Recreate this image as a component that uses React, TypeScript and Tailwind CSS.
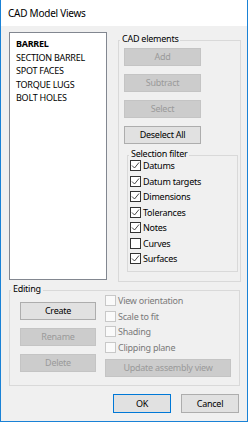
import React from "react";

const font = "font-['Segoe_UI','Noto_Sans',sans-serif] tracking-[-0.25px]";

const views = ["BARREL", "SECTION BARREL", "SPOT FACES", "TORQUE LUGS", "BOLT HOLES"];

const filters = [
  { label: "Datums", checked: true },
  { label: "Datum targets", checked: true },
  { label: "Dimensions", checked: true },
  { label: "Tolerances", checked: true },
  { label: "Notes", checked: true },
  { label: "Curves", checked: false },
  { label: "Surfaces", checked: true },
];

const editOptions = ["View orientation", "Scale to fit", "Shading", "Clipping plane"];

function Btn({ label, disabled, className = "" }: { label: string; disabled?: boolean; className?: string }) {
  return (
    <div
      className={`h-[18px] flex items-center justify-center text-[9px] border ${
        disabled ? "bg-[#cccccc] border-[#c4c4c4] text-[#9a9a9a]" : "bg-[#e1e1e1] border-[#adadad] text-black"
      } ${className}`}
    >
      {label}
    </div>
  );
}

function Check({ label, checked, disabled }: { label: string; checked?: boolean; disabled?: boolean }) {
  return (
    <div className="h-[15.5px] flex items-center gap-[2px]">
      <div
        className={`w-[11px] h-[11px] border flex items-center justify-center ${
          disabled ? "border-[#c8c8c8] bg-[#fafafa]" : "border-[#333333] bg-white"
        }`}
      >
        {checked && (
          <svg width="9" height="9" viewBox="0 0 9 9">
            <polyline points="1,4.5 3.5,7 8,1.5" fill="none" stroke="#333" strokeWidth="0.9" />
          </svg>
        )}
      </div>
      <span className={`text-[9px] ${disabled ? "text-[#7a7a7a]" : "text-black"}`}>{label}</span>
    </div>
  );
}

function Group({ title, className = "", children }: { title: string; className?: string; children: React.ReactNode }) {
  return (
    <div className={`relative border border-[#d9d9d9] ${className}`}>
      <span className="absolute -top-[8px] left-[1px] px-[2px] bg-[#f0f0f0] text-[9px] leading-[12px] text-black">
        {title}
      </span>
      {children}
    </div>
  );
}

export default function App() {
  return (
    <div className={`w-[248px] h-[422px] flex flex-col bg-[#f0f0f0] border-x border-b border-[#1a82d6] ${font}`}>
      <div className="h-[26px] shrink-0 bg-white flex items-center pl-[7px] text-[10px] text-black">CAD Model Views</div>

      <div className="flex pl-[8px] pt-[6px]">
        <div className="w-[98px] h-[248px] bg-white border border-[#828790] pl-[6px] pt-[4px]">
          {views.map((v, i) => (
            <div key={v} className={`h-[13.5px] leading-[13.5px] text-[9px] text-black ${i === 0 ? "font-bold" : ""}`}>
              {v}
            </div>
          ))}
        </div>

        <Group title="CAD elements" className="ml-[11px] mt-[8px] w-[123px] h-[242px] pl-[5px] pt-[7px]">
          <div className="flex flex-col gap-[8px]">
            <Btn label="Add" disabled className="w-[77px]" />
            <Btn label="Subtract" disabled className="w-[77px]" />
            <Btn label="Select" disabled className="w-[77px]" />
            <Btn label="Deselect All" className="w-[77px]" />
          </div>
          <Group title="Selection filter" className="ml-[3px] mt-[11px] w-[111px] h-[117px] pl-[2px] pt-[2px]">
            {filters.map((f) => (
              <Check key={f.label} label={f.label} checked={f.checked} />
            ))}
          </Group>
        </Group>
      </div>

      <Group title="Editing" className="ml-[8px] mt-[8px] w-[231px] h-[96px] flex">
        <div className="flex flex-col gap-[8px] pl-[10px] pt-[11px]">
          <Btn label="Create" className="w-[76px]" />
          <Btn label="Rename" disabled className="w-[76px]" />
          <Btn label="Delete" disabled className="w-[76px]" />
        </div>
        <div className="flex flex-col pl-[9px] pt-[2px]">
          {editOptions.map((o) => (
            <Check key={o} label={o} disabled />
          ))}
          <Btn label="Update assembly view" disabled className="w-[126px] mt-[4px]" />
        </div>
      </Group>

      <div className="flex justify-end gap-[10px] pr-[8px] mt-[8px]">
        <div className="w-[58px] h-[19px] flex items-center justify-center text-[9px] bg-[#e1e1e1] border border-[#0078d7] text-black">
          OK
        </div>
        <Btn label="Cancel" className="w-[58px] h-[19px]" />
      </div>
    </div>
  );
}
